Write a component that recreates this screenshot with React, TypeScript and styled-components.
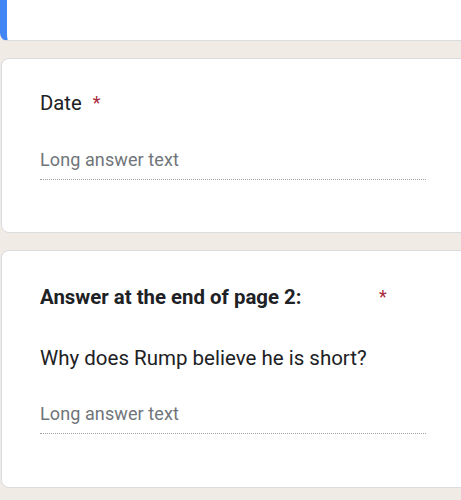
import React from "react";
import styled, { createGlobalStyle } from "styled-components";

const Global = createGlobalStyle`
  html, body {
    margin: 0;
    padding: 0;
    background: #f0ebe4;
    overflow: hidden;
  }
  body {
    font-family: Roboto, "Liberation Sans", Arial, sans-serif;
    color: #202124;
  }
`;

const Page = styled.div`
  width: 461px;
  height: 500px;
  overflow: hidden;
  display: flex;
  flex-direction: column;
  background: #f0ebe4;
`;

const HeaderCard = styled.div`
  box-sizing: border-box;
  width: 480px;
  height: 41px;
  background: #fff;
  border-left: 7px solid #4285f4;
  border-bottom: 1px solid #dadce0;
  border-bottom-left-radius: 8px;
  flex-shrink: 0;
`;

const Card = styled.div<{ $top: number; $pt: number; $pb: number }>`
  box-sizing: border-box;
  width: 480px;
  margin-top: ${(p) => p.$top}px;
  margin-left: 1px;
  background: #fff;
  border: 1px solid #dadce0;
  border-radius: 8px;
  padding: ${(p) => p.$pt}px 0 ${(p) => p.$pb}px 38px;
  display: flex;
  flex-direction: column;
  flex-shrink: 0;
`;

const TitleRow = styled.div`
  display: flex;
  align-items: flex-start;
`;

const Title = styled.div<{ $bold?: boolean; $w?: number }>`
  font-size: ${(p) => (p.$bold ? 20.4 : 20.3)}px;
  line-height: 24px;
  font-weight: ${(p) => (p.$bold ? 700 : 400)};
  color: #202124;
  ${(p) => (p.$w ? `flex: 0 0 ${p.$w}px;` : "")}
`;

const Required = styled.span<{ $ml: number }>`
  color: #a8283a;
  font-size: 18px;
  line-height: 24px;
  margin-left: ${(p) => p.$ml}px;
`;

const Question = styled.div`
  font-size: 20.5px;
  line-height: 24px;
  color: #202124;
  margin-top: 37px;
`;

const Answer = styled.div<{ $mt: number }>`
  box-sizing: border-box;
  width: 386px;
  margin-top: ${(p) => p.$mt}px;
  font-size: 18px;
  line-height: 22px;
  color: #70757a;
  padding-bottom: 8px;
  border-bottom: 1px dotted #9aa0a6;
  letter-spacing: 0.1px;
`;

export default function App() {
  return (
    <>
      <Global />
      <Page>
        <HeaderCard />
        <Card $top={17} $pt={32} $pb={52}>
          <TitleRow>
            <Title>Date</Title>
            <Required $ml={11}>*</Required>
          </TitleRow>
          <Answer $mt={34}>Long answer text</Answer>
        </Card>
        <Card $top={17} $pt={34} $pb={53}>
          <TitleRow>
            <Title $bold $w={339}>
              Answer at the end of page 2:
            </Title>
            <Required $ml={0}>*</Required>
          </TitleRow>
          <Question>Why does Rump believe he is short?</Question>
          <Answer $mt={33}>Long answer text</Answer>
        </Card>
      </Page>
    </>
  );
}
